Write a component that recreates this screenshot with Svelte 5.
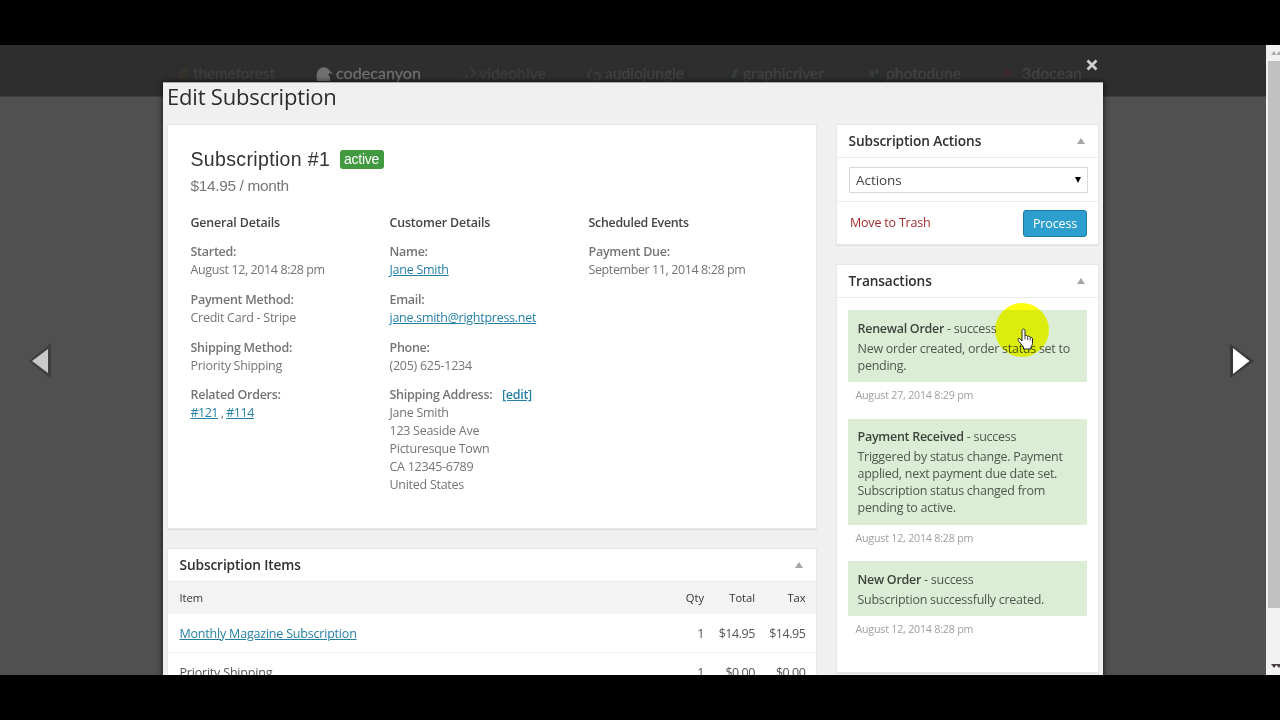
<script>
  const brands = [
    { name: 'themeforest', left: 177, gap: 16, width: 82, tone: '#3f3f3f', icon: 'leaf' },
    { name: 'codecanyon', left: 316, gap: 20, width: 85, tone: '#707070', icon: 'canyon' },
    { name: 'videohive', left: 462, gap: 17, width: 67, tone: '#3e3e3e', icon: 'video' },
    { name: 'audiojungle', left: 587, gap: 18, width: 79, tone: '#424242', icon: 'audio' },
    { name: 'graphicriver', left: 729, gap: 14, width: 81, tone: '#424242', icon: 'river' },
    { name: 'photodune', left: 868, gap: 18, width: 75, tone: '#424242', icon: 'dune' },
    { name: '3docean', left: 1001, gap: 21, width: 60, tone: '#444444', icon: 'ocean' }
  ];
  const general = [
    { label: 'Started:', value: 'August 12, 2014 8:28 pm', dated: true },
    { label: 'Payment Method:', value: 'Credit Card - Stripe' },
    { label: 'Shipping Method:', value: 'Priority Shipping' }
  ];
  const address = ['Jane Smith', '123 Seaside Ave', 'Picturesque Town', 'CA 12345-6789', 'United States'];
  const transactions = [
    { title: 'Renewal Order', lines: ['New order created, order status set to', 'pending.'], date: 'August 27, 2014 8:29 pm' },
    { title: 'Payment Received', lines: ['Triggered by status change. Payment', 'applied, next payment due date set.', 'Subscription status changed from', 'pending to active.'], date: 'August 12, 2014 8:28 pm' },
    { title: 'New Order', lines: ['Subscription successfully created.'], date: 'August 12, 2014 8:28 pm' }
  ];
</script>

{#snippet toggle()}
  <svg class="toggle" width="8" height="6" viewBox="0 0 8 6"><path d="M4 0 8 6H0Z" fill="#a5a5a5" /></svg>
{/snippet}

<div class="screen">
  <div class="page">
    <div class="view">
      <svg class="brands" width="1266" height="51" viewBox="0 45 1266 51">
        {#each brands as b}
          <g transform="translate({b.left} 66)" fill={b.tone} stroke="none">
            {#if b.icon === 'leaf'}
              <path d="M1 12C0 5 6 1 10 1c2 6-1 13-7 13Z" fill="#35322b" />
            {:else if b.icon === 'canyon'}
              <path d="M1 15C0 9 1 3 6 1.5 9 .5 12 2 13 4l4 4-4-1c-1 2 0 3 1 4v4Z" />
            {:else if b.icon === 'video'}
              <path d="M8 2l5 5-4 4M1 13l5-4" fill="none" stroke="#393939" stroke-width="2" />
            {:else if b.icon === 'audio'}
              <path d="M5 3C1 5 0 10 3 13M7 8c4-3 7 1 6 4s-5 3-6 0" fill="none" stroke="#404040" stroke-width="1.5" />
            {:else if b.icon === 'river'}
              <path d="M2 12 5 4l4-2-3 10Z" fill="#363b3c" />
            {:else if b.icon === 'dune'}
              <path d="M1 5h5v6H3zM7 3h3v5H7z" fill="#353d3d" />
            {:else}
              <path d="M2 6l4-3 5 3-2 5H5Z" fill="#40292c" />
            {/if}
          </g>
          <text x={b.left + b.gap} y="79" fill={b.tone} stroke={b.tone} stroke-width=".3" textLength={b.width} lengthAdjust="spacingAndGlyphs">{b.name}</text>
        {/each}
      </svg>

      <svg class="arrow prev" width="24" height="36" viewBox="0 0 24 36"><path d="M0 18 22 0V36Z" fill="#3f3f3f" /><path d="M3 18 19 6V30Z" fill="#c9c9c9" /></svg>
      <svg class="arrow next" width="26" height="36" viewBox="0 0 26 36"><path d="M25 18 1 1V35Z" fill="#383838" /><path d="M20.500 18 4 5V31Z" fill="#fff" /></svg>
      <svg class="close" width="12" height="12" viewBox="0 0 12 12"><path d="M1.500 1.500 10.500 10.500M10.500 1.500 1.500 10.500" stroke="#d0d0d0" stroke-width="2.8" /></svg>

      <main class="modal">
        <h1>Edit Subscription</h1>
        <div class="columns">
          <div class="left">
            <section class="card details">
              <div class="title"><h2>Subscription #1</h2><span class="badge">active</span></div>
              <div class="price">$14.95 / month</div>
              <div class="cols">
                <div>
                  <h3>General Details</h3>
                  {#each general as g}
                    <div class="field"><b>{g.label}</b><span class:dated={g.dated}>{g.value}</span></div>
                  {/each}
                  <div class="field"><b>Related Orders:</b><span class="orders"><a href="#121">#121</a> , <a href="#114">#114</a></span></div>
                </div>
                <div>
                  <h3>Customer Details</h3>
                  <div class="field"><b>Name:</b><span><a href="#customer">Jane Smith</a></span></div>
                  <div class="field"><b>Email:</b><span><a href="#email">jane.smith@rightpress.net</a></span></div>
                  <div class="field"><b>Phone:</b><span>(205) 625-1234</span></div>
                  <div class="field">
                    <b>Shipping Address: <a class="edit" href="#edit">[edit]</a></b>
                    {#each address as line}<span>{line}</span>{/each}
                  </div>
                </div>
                <div>
                  <h3 class="tight">Scheduled Events</h3>
                  <div class="field"><b>Payment Due:</b><span class="dated">September 11, 2014 8:28 pm</span></div>
                </div>
              </div>
            </section>

            <section class="card items">
              <header><h4>Subscription Items</h4>{@render toggle()}</header>
              <div class="row head"><span>Item</span><span>Qty</span><span>Total</span><span>Tax</span></div>
              <div class="row"><span><a href="#item">Monthly Magazine Subscription</a></span><span>1</span><span>$14.95</span><span>$14.95</span></div>
              <div class="row last"><span>Priority Shipping</span><span>1</span><span>$0.00</span><span>$0.00</span></div>
            </section>
          </div>

          <div class="right">
            <section class="card">
              <header><h4>Subscription Actions</h4>{@render toggle()}</header>
              <div class="choose">
                <div class="select"><span>Actions</span><svg width="6" height="6" viewBox="0 0 6 6"><path d="M0 0h6L3 6Z" fill="#000" /></svg></div>
              </div>
              <div class="submit"><span class="trash">Move to Trash</span><button>Process</button></div>
            </section>

            <section class="card transactions">
              <header><h4>Transactions</h4>{@render toggle()}</header>
              <div class="log">
                {#each transactions as t}
                  <div class="note">
                    <div class="note-title"><b>{t.title}</b> - success</div>
                    {#each t.lines as line}<div class="note-line">{line}</div>{/each}
                  </div>
                  <div class="date">{t.date}</div>
                {/each}
              </div>
            </section>
          </div>
        </div>
      </main>
      <div class="halo"></div>
      <svg class="hand" width="17" height="22" viewBox="0 0 17 22"><path d="M5 13V2.500C5 .5 8 .5 8 2.500V8c.5-1 2.500-.8 2.700.6.8-.8 2.300-.4 2.500.9 1-.5 2.300.2 2.300 1.500v4.500c0 1-1 2.500-1.500 3.500v2H6.500v-2L2 13.500C0 11 1.500 9.500 3.300 11Z" fill="#fff" stroke="#222" stroke-width="1" stroke-linejoin="round" /><path d="M8 8v3.500M10.700 9v3M13.200 10v2.500" stroke="#333" stroke-width=".9" fill="none" /></svg>
    </div>
    <div class="scroll">
      <svg width="10" height="4" viewBox="0 0 10 4"><path d="M0 4 3 0 5.500 4 8 0 10 3v1Z" fill="#aaa" /></svg>
      <div class="thumb"></div>
      <svg class="down" width="10" height="4" viewBox="0 0 10 4"><path d="M0 0h10v1L8 4 5.500 1 3 4Z" fill="#4b4142" /></svg>
    </div>
  </div>
</div>

<style>
  :global(body) { background: #000; overflow: hidden; }
  * { box-sizing: border-box; }
  .screen { width: 1280px; height: 720px; padding: 45px 0; background: #000; font: 12.500px/18px 'Open Sans', sans-serif; letter-spacing: -.27px; color: #757575; overflow: hidden; }
  .page { display: flex; height: 630px; }
  .view { position: relative; width: 1266px; height: 630px; overflow: hidden; background: linear-gradient(#2e2e2e 51px, #505050 52px); }
  .brands { position: absolute; left: 0; top: 0; font: 16px Lato, sans-serif; letter-spacing: 0; }
  .arrow { position: absolute; top: 298px; }
  .prev { left: 29px; }
  .next { left: 1229px; }
  .close { position: absolute; left: 1086px; top: 14px; }
  .modal { position: relative; margin: 37px 0 0 163px; width: 940px; height: 620px; background: #f0f0f0; border-top: 1px solid #aaa; padding: 0 4px; box-shadow: 0 0 6px rgba(0,0,0,.8); }
  h1, h2, h3, h4 { margin: 0; }
  h1 { font-weight: 400; font-size: 22px; line-height: 27px; height: 41px; color: #2c2c2c; letter-spacing: -.2px; }
  .columns { display: flex; justify-content: space-between; }
  .left { width: 650px; }
  .right { width: 263px; }
  .card { background: #fff; border: 1px solid #e7e7e7; box-shadow: 0 1px 1px rgba(0,0,0,.06); margin-bottom: 19px; }
  .details { height: 405px; padding: 21px 22.500px 0; }
  .title { display: flex; align-items: center; height: 26px; }
  h2 { font: 19.500px/26px 'Liberation Sans', Arial, sans-serif; letter-spacing: .35px; color: #333; width: 149px; white-space: nowrap; }
  .badge { background: #419a40; color: #fff; font: 14px/19px 'Liberation Sans', Arial, sans-serif; letter-spacing: -.25px; border-radius: 3px; width: 44px; text-align: center; }
  .price { font: 15.400px/22px 'Liberation Sans', Arial, sans-serif; margin-top: 3px; color: #777; letter-spacing: -.32px; }
  .cols { display: grid; grid-template-columns: 199px 199px 1fr; margin-top: 17px; white-space: nowrap; }
  h3 { font-size: 12.400px; line-height: 18px; font-weight: 600; color: #444; margin-bottom: 11px; letter-spacing: -.14px; }
  h3.tight { letter-spacing: -.27px; }
  .field { margin-bottom: 12px; line-height: 17.900px; }
  .field b, .field > span { display: block; }
  .field .dated { letter-spacing: -.4px; }
  .field .orders { letter-spacing: -.5px; }
  b { font-weight: 600; }
  a { color: #257fa5; text-decoration: underline; }
  .edit { margin-left: 6.500px; }
  header { display: flex; justify-content: space-between; align-items: center; height: 33px; padding: 0 13px 0 11.500px; border-bottom: 1px solid #eaeaea; }
  h4 { font-size: 13.700px; line-height: 20px; font-weight: 600; color: #303030; letter-spacing: -.12px; padding-bottom: 1px; }
  .row { display: grid; grid-template-columns: 1fr 60px 51px 50.500px; height: 39px; align-items: center; padding: 1px 10.500px 0 11.500px; color: #555; border-bottom: 1px solid #f5f5f5; }
  .row > span { letter-spacing: -.2px; }
  .row > span:not(:first-child) { text-align: right; letter-spacing: -.45px; }
  .row.head { height: 32px; padding-top: 0; background: #f3f3f3; color: #333; }
  .row.head > span, .row.head > span:not(:first-child) { font-size: 11.200px; letter-spacing: -.05px; }
  .choose { height: 44px; padding: 9px 10.500px 0 12px; border-bottom: 1px solid #eee; }
  .select { height: 26px; border: 1px solid #d8d8d8; padding: 0 6px; display: flex; align-items: center; justify-content: space-between; font-size: 13.500px; color: #444; letter-spacing: -.05px; }
  .submit { height: 42px; display: flex; align-items: center; justify-content: space-between; padding: 0 11px 0 13px; }
  .trash { color: #a52c2c; letter-spacing: -.2px; }
  button { width: 64px; height: 27px; padding: 0; background: #2c9fce; color: #fff; border: 1px solid #197ba5; border-radius: 3px; font: 12.500px 'Open Sans', sans-serif; letter-spacing: -.15px; }
  .transactions { height: 409px; }
  .log { padding: 12px 11px 0; }
  .note { background: #dcedd6; padding: 9.500px 9.500px 8.500px; color: #4e574d; white-space: nowrap; }
  .note-title { line-height: 18px; height: 20px; }
  .note-title b { color: #3d433c; }
  .note-line { line-height: 17px; }
  .date { font-size: 10.700px; line-height: 16px; height: 36.700px; padding: 5px 7.500px 0; color: #a0a0a0; letter-spacing: -.22px; }
  .halo { position: absolute; left: 995px; top: 258px; width: 54px; height: 54px; border-radius: 50%; background: #ffff10; mix-blend-mode: multiply; }
  .hand { position: absolute; left: 1017px; top: 283px; }
  .scroll { width: 14px; height: 630px; background: #f1f1f1; padding-left: 2px; display: flex; flex-direction: column; overflow: hidden; }
  .scroll svg { margin: 6px 0 6px 3px; flex: none; }
  .thumb { height: 547px; background: #c1c1c1; flex: none; }
  .scroll .down { margin-top: 56px; }
</style>
